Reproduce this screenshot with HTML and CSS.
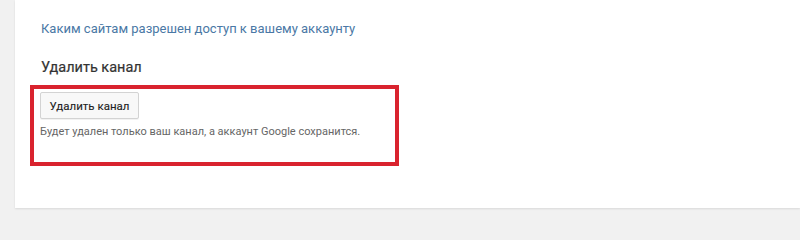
FILE: index.html
```html
<!DOCTYPE html>
<html lang="ru">
<head>
<meta charset="utf-8">
<link rel="stylesheet" href="styles.css">
</head>
<body>
<div class="card">
  <a class="link" href="#">Каким сайтам разрешен доступ к вашему аккаунту</a>
  <h2 class="heading">Удалить канал</h2>
  <div class="highlight">
    <button class="btn" type="button">Удалить канал</button>
    <p class="note">Будет удален только ваш канал, а аккаунт Google сохранится.</p>
  </div>
</div>
</body>
</html>
```
FILE: styles.css
```css
html, body {
  margin: 0;
  padding: 0;
}
body {
  background: #f1f1f1;
  font-family: Roboto, "Liberation Sans", Arial, sans-serif;
  width: 800px;
  height: 226px;
  overflow: hidden;
}
.card {
  margin-left: 15px;
  height: 208px;
  background: #fff;
  box-shadow: 0 1px 2px rgba(0, 0, 0, 0.1);
  padding: 20px 0 0 26px;
  box-sizing: border-box;
}
.link {
  display: block;
  font-size: 13px;
  line-height: 17px;
  color: #4a78a5;
  text-decoration: none;
}
.heading {
  margin: 22px 0 0 0;
  font-size: 14.5px;
  line-height: 18px;
  font-weight: 400;
  color: #333;
  -webkit-text-stroke: 0.2px #333;
}
.highlight {
  margin: 8px 0 0 -11px;
  width: 355px;
  border: 4.5px solid #d9232e;
  padding: 3px 0 23px 6px;
}
.btn {
  display: block;
  height: 27px;
  width: 99px;
  padding: 0;
  border: 1px solid #d3d3d3;
  border-radius: 2px;
  background: #f8f8f8;
  font-family: inherit;
  font-size: 11.5px;
  font-weight: 400;
  color: #222;
  -webkit-text-stroke: 0.1px #222;
  box-shadow: 0 1px 0 rgba(0, 0, 0, 0.05);
}
.note {
  margin: 6px 0 0 0;
  font-size: 11px;
  line-height: 14px;
  color: #666;
}
```
